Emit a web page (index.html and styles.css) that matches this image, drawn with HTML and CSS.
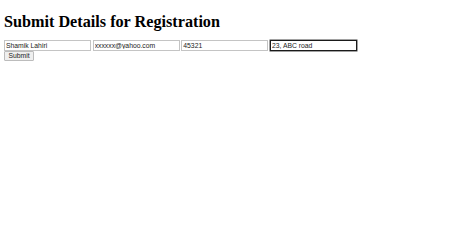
FILE: index.html
```html
<!DOCTYPE html>
<html>
<head>
<meta charset="utf-8">
<link rel="stylesheet" href="styles.css">
</head>
<body>
<h1 class="title">Submit Details for Registration</h1>
<form class="form">
  <div class="fields">
    <input class="field" type="text" value="Shamik Lahiri">
    <input class="field" type="text" value="xxxxxx@yahoo.com">
    <input class="field" type="text" value="45321">
    <input class="field field-focus" type="text" value="23, ABC road">
  </div>
  <button class="submit" type="button">Submit</button>
</form>
</body>
</html>
```
FILE: styles.css
```css
html, body {
  background: #ffffff;
}
body {
  margin: 4px;
  font-family: "Liberation Serif", serif;
}
.title {
  font-family: "Liberation Serif", serif;
  font-weight: bold;
  font-size: 16.2px;
  line-height: 19px;
  margin: 9px 0 8px 0;
  color: #000;
}
.form {
  margin: 0;
}
.fields {
  display: flex;
  gap: 1.67px;
}
.field {
  box-sizing: border-box;
  width: 87px;
  height: 11px;
  margin: 0;
  padding: 0 1px;
  border: 1px solid #c4c4c4;
  font-family: "Liberation Sans", Arial, sans-serif;
  font-size: 6.8px;
  color: #222;
  background: #fff;
  outline: none;
}
.field-focus {
  border: 1px solid #1a1a1a;
  box-shadow: 0 0 0 0.5px #444;
}
.submit {
  display: block;
  box-sizing: border-box;
  height: 10px;
  margin: 0;
  padding: 0 3.5px;
  border: 1px solid #bcbcbc;
  border-radius: 1px;
  background: #efefef;
  font-family: "Liberation Sans", Arial, sans-serif;
  font-size: 6.8px;
  line-height: 8px;
  color: #222;
}
```
